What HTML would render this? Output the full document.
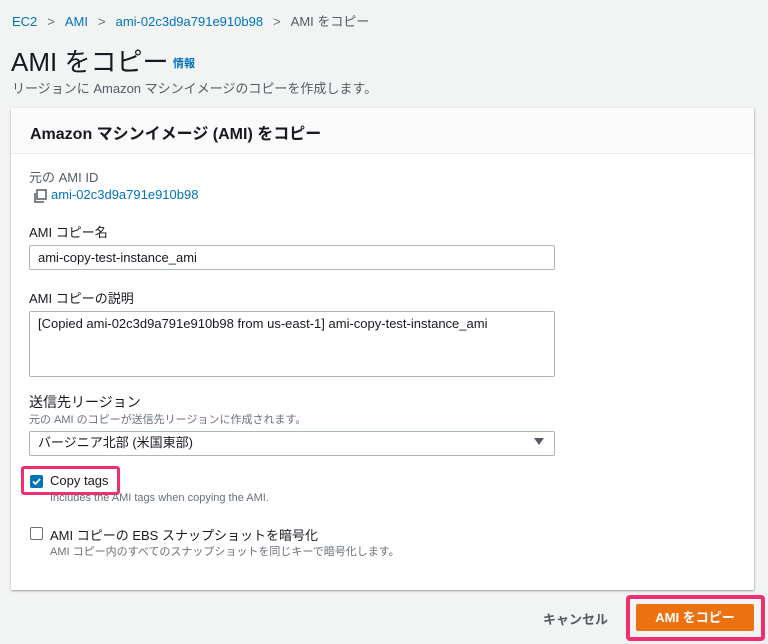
<!DOCTYPE html>
<html><head><meta charset="utf-8"><style>
*{box-sizing:border-box;margin:0;padding:0}
body{width:768px;height:644px;background:#f2f3f3;font-family:"Liberation Sans","Noto Sans CJK JP",sans-serif;color:#16191f;position:relative;overflow:hidden}
.a{position:absolute;white-space:nowrap}
.link{color:#0073bb}
.lbl{font-size:13px;color:#16191f}
.desc{font-size:11px;color:#687078}
.inp{position:absolute;left:29px;width:526px;border:1px solid #aab7b8;background:#fff;border-radius:2px;font-size:13px;padding:3px 8px;line-height:17px;color:#16191f}
</style></head><body>
<div class="a" style="left:12px;top:11px;font-size:13px"><span class="link">EC2</span><span style="color:#687078;margin:0 10px">&gt;</span><span class="link">AMI</span><span style="color:#687078;margin:0 10px">&gt;</span><span class="link">ami-02c3d9a791e910b98</span><span style="color:#687078;margin:0 10px">&gt;</span><span style="color:#545b64">AMI をコピー</span></div>
<div class="a" style="left:11px;top:42px;font-size:26px">AMI をコピー</div>
<div class="a link" style="left:173px;top:55px;font-size:11px;font-weight:bold">情報</div>
<div class="a" style="left:12px;top:78px;font-size:13px;color:#545b64">リージョンに Amazon マシンイメージのコピーを作成します。</div>
<div class="a" style="left:11px;top:108px;width:743px;height:482px;background:#fff;box-shadow:0 1px 2px rgba(0,28,36,.3),1px 1px 1px rgba(0,28,36,.1)">
<div style="height:46px;background:#fafafa;border-bottom:1px solid #eaeded"></div></div>
<div class="a" style="left:30px;top:120px;font-size:16px;font-weight:bold">Amazon マシンイメージ (AMI) をコピー</div>
<div class="a lbl" style="left:29px;top:167px;color:#545b64">元の AMI ID</div>
<svg class="a" style="left:33px;top:189px" width="14" height="14" viewBox="0 0 14 14"><rect x="4" y="1" width="9" height="9" fill="none" stroke="#545b64" stroke-width="1.5"/><path d="M2 4v9h9" fill="none" stroke="#545b64" stroke-width="1.5"/></svg>
<div class="a link" style="left:51px;top:187px;font-size:13px">ami-02c3d9a791e910b98</div>
<div class="a lbl" style="left:29px;top:222px">AMI コピー名</div>
<div class="inp" style="top:245px;height:25px">ami-copy-test-instance_ami</div>
<div class="a lbl" style="left:29px;top:288px">AMI コピーの説明</div>
<div class="inp" style="top:311px;height:66px">[Copied ami-02c3d9a791e910b98 from us-east-1] ami-copy-test-instance_ami</div>
<div class="a lbl" style="left:29px;top:392px;font-size:14px">送信先リージョン</div>
<div class="a desc" style="left:29px;top:411px">元の AMI のコピーが送信先リージョンに作成されます。</div>
<div class="inp" style="top:431px;height:25px;line-height:15px">バージニア北部 (米国東部)</div>
<div class="a" style="left:534px;top:438px;width:0;height:0;border-left:5px solid transparent;border-right:5px solid transparent;border-top:7px solid #545b64"></div>
<div class="a" style="left:21px;top:466px;width:99px;height:29px;border:3px solid #f0306e;border-radius:3px"></div>
<div class="a" style="left:30px;top:475px;width:13px;height:13px;background:#0073bb;border-radius:2px"><svg width="13" height="13" viewBox="0 0 13 13"><path d="M3 6.5l2.5 2.5 4.5-5" fill="none" stroke="#fff" stroke-width="1.8"/></svg></div>
<div class="a" style="left:50px;top:473px;font-size:13px">Copy tags</div>
<div class="a desc" style="left:50px;top:492px">Includes the AMI tags when copying the AMI.</div>
<div class="a" style="left:30px;top:527px;width:13px;height:13px;border:1px solid #687078;border-radius:2px;background:#fff"></div>
<div class="a" style="left:50px;top:525px;font-size:13px">AMI コピーの EBS スナップショットを暗号化</div>
<div class="a desc" style="left:50px;top:543px">AMI コピー内のすべてのスナップショットを同じキーで暗号化します。</div>
<div class="a" style="left:543px;top:609px;font-size:13px;font-weight:bold;color:#545b64">キャンセル</div>
<div class="a" style="left:626px;top:595px;width:139px;height:46px;border:4px solid #f0306e;border-radius:4px;background:#f2f3f3"></div>
<div class="a" style="left:636px;top:604px;width:118px;height:27px;background:#ec7211;border-radius:2px;color:#fff;font-size:13px;font-weight:bold;text-align:center;line-height:27px">AMI をコピー</div>
</body></html>
